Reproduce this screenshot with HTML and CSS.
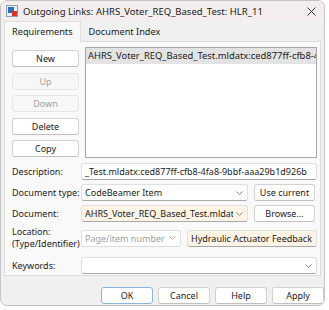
FILE: index.html
```html
<!DOCTYPE html>
<html>
<head>
<meta charset="utf-8">
<link rel="stylesheet" href="styles.css">
</head>
<body>
<div class="window">
  <div class="titlebar">
    <svg class="appicon" width="12" height="12" viewBox="0 0 12 12">
      <rect x="0.5" y="0.5" width="11" height="11" fill="#e9eef5" stroke="#8aa0b8"/>
      <rect x="2" y="2" width="6" height="6" fill="#2f6fb5"/>
      <rect x="6" y="6" width="5" height="5" fill="#d9342b"/>
    </svg>
    <span class="title">Outgoing Links: AHRS_Voter_REQ_Based_Test: HLR_11</span>
    <svg class="close" width="9" height="9" viewBox="0 0 9 9">
      <path d="M0.5 0.5 L8.5 8.5 M8.5 0.5 L0.5 8.5" stroke="#333" stroke-width="1" fill="none"/>
    </svg>
  </div>
  <div class="tabs">
    <div class="tab active">Requirements</div>
    <div class="tab">Document Index</div>
  </div>
  <div class="panel">
    <div class="top">
      <div class="btncol">
        <div class="btn">New</div>
        <div class="btn disabled">Up</div>
        <div class="btn disabled">Down</div>
        <div class="btn">Delete</div>
        <div class="btn">Copy</div>
      </div>
      <div class="list">
        <div class="item sel">AHRS_Voter_REQ_Based_Test.mldatx:ced877ff-cfb8-4fa8-9bbf-aaa29b1d926b</div>
      </div>
    </div>
    <div class="form">
      <div class="row">
        <div class="label">Description:</div>
        <div class="field text">_Test.mldatx:ced877ff-cfb8-4fa8-9bbf-aaa29b1d926b</div>
      </div>
      <div class="row">
        <div class="label">Document type:</div>
        <div class="field combo"><span class="val">CodeBeamer Item</span><svg class="chev" width="7" height="4" viewBox="0 0 7 4"><path d="M0.5 0.5 L3.5 3.5 L6.5 0.5" stroke="#888" fill="none"/></svg></div>
        <div class="btn side">Use current</div>
      </div>
      <div class="row">
        <div class="label">Document:</div>
        <div class="field combo cream"><span class="val">AHRS_Voter_REQ_Based_Test.mldatx</span><svg class="chev" width="7" height="4" viewBox="0 0 7 4"><path d="M0.5 0.5 L3.5 3.5 L6.5 0.5" stroke="#888" fill="none"/></svg></div>
        <div class="btn side">Browse...</div>
      </div>
      <div class="row loc">
        <div class="label two">Location:<br>(Type/Identifier)</div>
        <div class="field combo small disabledtext"><span class="val">Page/item number</span><svg class="chev" width="7" height="4" viewBox="0 0 7 4"><path d="M0.5 0.5 L3.5 3.5 L6.5 0.5" stroke="#aaa" fill="none"/></svg></div>
        <div class="field text cream grow">Hydraulic Actuator Feedback</div>
      </div>
      <div class="row kw">
        <div class="label">Keywords:</div>
        <div class="field combo"><span class="val"></span><svg class="chev" width="7" height="4" viewBox="0 0 7 4"><path d="M0.5 0.5 L3.5 3.5 L6.5 0.5" stroke="#888" fill="none"/></svg></div>
      </div>
    </div>
  </div>
  <div class="footer">
    <div class="btn foot default">OK</div>
    <div class="btn foot">Cancel</div>
    <div class="btn foot">Help</div>
    <div class="btn foot">Apply</div>
  </div>
</div>
</body>
</html>
```
FILE: styles.css
```css
* { box-sizing: border-box; }
html, body { margin: 0; padding: 0; background: #ffffff; }
body {
  font-family: "Noto Sans", "Open Sans", sans-serif;
  font-size: 9px;
  color: #1b1b1b;
}
.window {
  width: 325px;
  height: 306px;
  border: 1px solid #c4c4c4;
  border-radius: 7px;
  overflow: hidden;
  background: #f0f0f0;
}
.titlebar {
  height: 20px;
  display: flex;
  align-items: center;
  padding-left: 5px;
  background: #f4eded;
}
.appicon { margin-right: 5px; flex: none; }
.title { font-size: 9.5px; white-space: nowrap; }
.close { margin-left: auto; margin-right: 8px; }
.tabs {
  display: flex;
  height: 20px;
  padding-left: 3px;
  align-items: flex-end;
}
.tab {
  height: 20px;
  line-height: 20px;
  padding: 0 8px;
  margin-bottom: -1px;
  font-size: 9.2px;
}
.tab.active {
  background: #f9f9f9;
  border: 1px solid #dedede;
  border-bottom: none;
  position: relative;
  z-index: 1;
  height: 21px;
  padding: 0 7px;
}
.panel {
  margin: 0 3px;
  height: 235px;
  border: 1px solid #dcdcdc;
  background: #f9f9f9;
  padding: 5px 3px 2px 7px;
}
.top { display: flex; gap: 6px; }
.btncol {
  width: 67px;
  padding-top: 3px;
  display: flex;
  flex-direction: column;
  gap: 5.5px;
}
.btn {
  height: 17px;
  line-height: 15px;
  text-align: center;
  background: #ffffff;
  border: 1px solid #d2d2d2;
  border-bottom-color: #c0c0c0;
  border-radius: 3px;
  white-space: nowrap;
}
.btn.disabled {
  background: #f7f7f7;
  border-color: #e6e6e6;
  color: #a3a3a3;
}
.list {
  flex: 1;
  height: 111px;
  background: #ffffff;
  border: 1px solid #a7a7a7;
  overflow: hidden;
}
.item {
  height: 16px;
  line-height: 15px;
  padding-left: 2px;
  white-space: nowrap;
  overflow: hidden;
  font-size: 9.4px;
}
.item.sel { background: #e3e3e3; }
.form {
  margin-top: 5px;
  display: flex;
  flex-direction: column;
  gap: 4px;
}
.row {
  display: flex;
  align-items: center;
  gap: 6px;
}
.row.kw { margin-top: 3px; }
.label {
  width: 69px;
  flex: none;
  margin-right: -6px;
  white-space: nowrap;
}
.label.two { line-height: 12px; }
.field {
  flex: 1;
  height: 17px;
  line-height: 15px;
  background: #ffffff;
  border: 1px solid #e0e0e0;
  border-bottom-color: #a8a8a8;
  border-radius: 3px;
  padding-left: 3px;
  white-space: nowrap;
  overflow: hidden;
  min-width: 0;
}
.field.cream { background: #fdf4e5; }
.combo {
  display: flex;
  align-items: center;
  padding-right: 4px;
}
.combo .val { flex: 1; overflow: hidden; white-space: nowrap; min-width: 0; }
.chev { flex: none; margin-left: 3px; }
.field.small { flex: none; width: 100px; }
.disabledtext { color: #a0a0a0; border-bottom-color: #dcdcdc; }
.btn.side { width: 61px; flex: none; margin-right: 2px; }
.footer {
  display: flex;
  justify-content: flex-end;
  gap: 5px;
  margin-top: 11px;
  padding-right: 0;
}
.btn.foot { width: 52px; }
.btn.default { border-color: #8fb4d9; }
```
